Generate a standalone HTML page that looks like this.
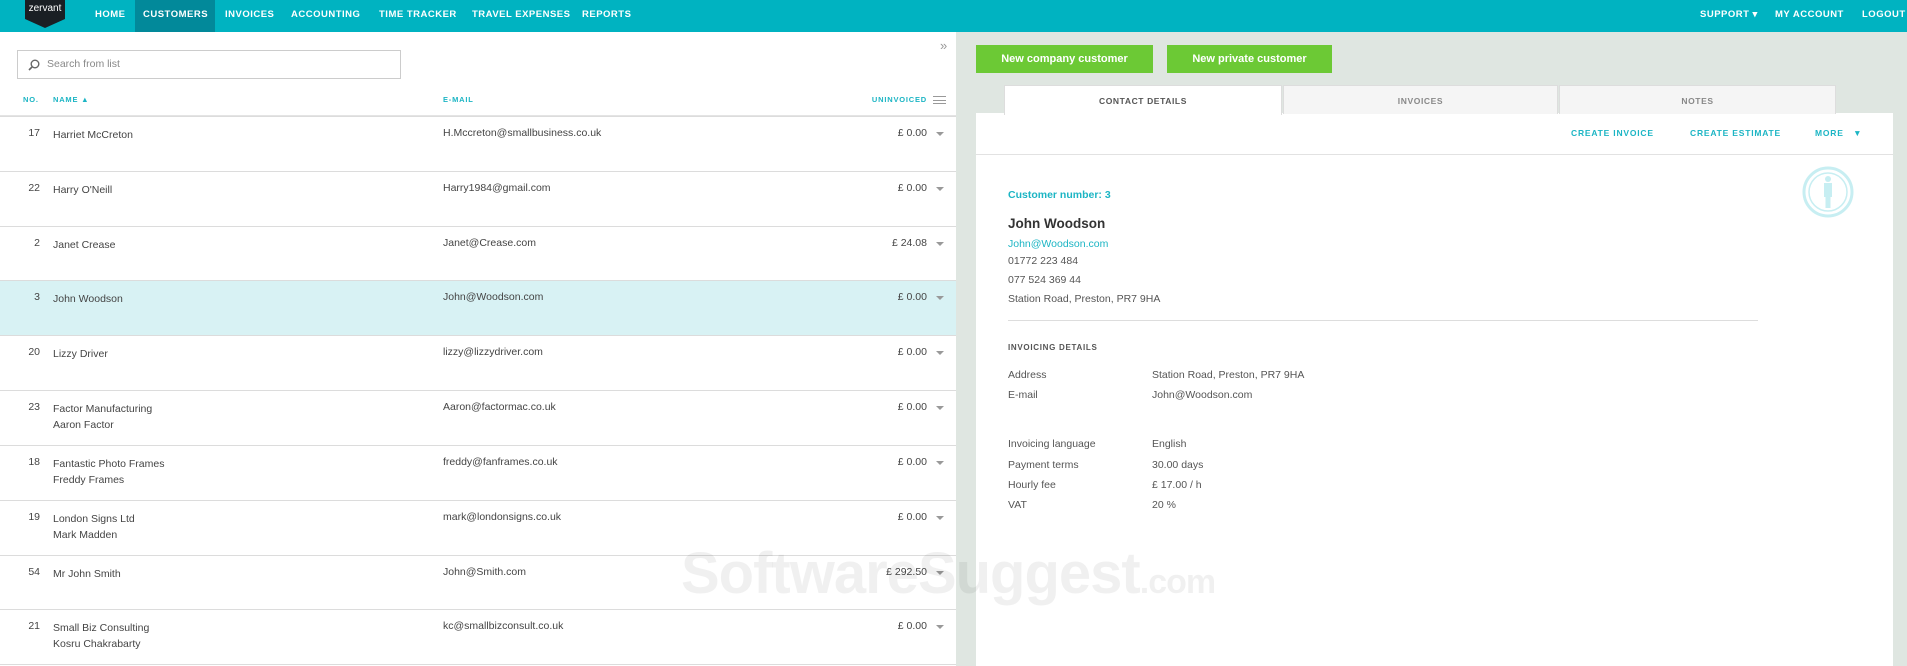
<!DOCTYPE html>
<html><head><meta charset="utf-8"><style>
*{margin:0;padding:0;box-sizing:border-box}
body{width:1907px;height:666px;overflow:hidden;background:#dfe6e1;font-family:"Liberation Sans",sans-serif;color:#444;position:relative}
.nav{position:absolute;left:0;top:0;width:1907px;height:32px;background:#00b3c1}
.nav a{position:absolute;top:0;height:32px;line-height:29px;color:#fff;font-size:9.5px;font-weight:bold;letter-spacing:.5px;text-decoration:none}
.logo{position:absolute;left:25px;top:0;width:40px;height:28px}
.left{position:absolute;left:0;top:32px;width:956px;height:634px;background:#fff}
.search{position:absolute;left:17px;top:18px;width:384px;height:29px;border:1px solid #ccc;font-size:10.5px;color:#888;line-height:27px;padding-left:29px}
.hdr{position:absolute;top:63px;font-size:7.5px;font-weight:bold;color:#1cb5c4;letter-spacing:.8px}
.row{position:absolute;left:0;width:956px;height:55px;border-top:1px solid #dcdcdc;font-size:10.5px;color:#444}
.row span{position:absolute}
.n{right:916px;top:10px}
.nm{left:53px;top:10px;line-height:16px}
.em{left:443px;top:10px}
.am{right:29px;top:10px}
.ar{left:936px;top:15px;width:0;height:0;border-left:4px solid transparent;border-right:4px solid transparent;border-top:4px solid #999}
.btn{position:absolute;top:45px;height:28px;background:#6cc935;color:#fff;font-size:11px;font-weight:bold;text-align:center;line-height:28px}
.tab{position:absolute;top:85px;height:29px;font-size:8.5px;font-weight:bold;letter-spacing:.6px;text-align:center;line-height:30px;border:1px solid #ddd;border-bottom:none}
.panel{position:absolute;left:976px;top:113px;width:917px;height:553px;background:#fff}
.act{position:absolute;top:128px;font-size:8.5px;font-weight:bold;color:#1cb5c4;letter-spacing:.8px}
.t{position:absolute;left:1008px;font-size:10.5px;color:#555}
.v{position:absolute;left:1152px;font-size:10.5px;color:#555}
</style></head><body>
<div class="nav">
<svg class="logo" viewBox="0 0 40 28"><path d="M0 0H40V19L20 28L0 19Z" fill="#1a1f24"/><text x="20" y="11" fill="#fff" font-size="10" text-anchor="middle" font-family="Liberation Sans">zervant</text></svg>
<div style="position:absolute;left:135px;top:0;width:80px;height:32px;background:#02899a"></div>
<a style="left:95px">HOME</a><a style="left:143px">CUSTOMERS</a><a style="left:225px">INVOICES</a><a style="left:291px">ACCOUNTING</a><a style="left:379px">TIME TRACKER</a><a style="left:472px">TRAVEL EXPENSES</a><a style="left:582px">REPORTS</a>
<a style="left:1700px">SUPPORT &#9662;</a><a style="left:1775px">MY ACCOUNT</a><a style="left:1862px">LOGOUT</a>
</div>
<div class="left">
<div class="search"><svg style="position:absolute;left:10px;top:8px" width="12" height="12" viewBox="0 0 12 12"><circle cx="7" cy="5" r="3.8" fill="none" stroke="#666" stroke-width="1.4"/><path d="M4.3 7.7L1 11" stroke="#666" stroke-width="1.6"/></svg>Search from list</div>
<div style="position:absolute;left:940px;top:6px;color:#999;font-size:13px">»</div>
<div class="hdr" style="left:23px">NO.</div>
<div class="hdr" style="left:53px">NAME &#9650;</div>
<div class="hdr" style="left:443px">E-MAIL</div>
<div class="hdr" style="right:29px">UNINVOICED</div>
<div style="position:absolute;left:933px;top:64px;width:13px;height:8px;border-top:1px solid #999;border-bottom:1px solid #999"></div><div style="position:absolute;left:933px;top:68px;width:13px;height:1px;background:#999"></div>
<div style="position:absolute;left:0;top:83px;width:956px;height:2px;background:#e4e4e4"></div>
</div>

<div class="row" style="top:116px"><span class="n">17</span><span class="nm">Harriet McCreton</span><span class="em">H.Mccreton@smallbusiness.co.uk</span><span class="am">£ 0.00</span><span class="ar"></span></div>
<div class="row" style="top:171px"><span class="n">22</span><span class="nm">Harry O'Neill</span><span class="em">Harry1984@gmail.com</span><span class="am">£ 0.00</span><span class="ar"></span></div>
<div class="row" style="top:226px"><span class="n">2</span><span class="nm">Janet Crease</span><span class="em">Janet@Crease.com</span><span class="am">£ 24.08</span><span class="ar"></span></div>
<div class="row" style="top:280px;background:#d8f2f4"><span class="n">3</span><span class="nm">John Woodson</span><span class="em">John@Woodson.com</span><span class="am">£ 0.00</span><span class="ar"></span></div>
<div class="row" style="top:335px"><span class="n">20</span><span class="nm">Lizzy Driver</span><span class="em">lizzy@lizzydriver.com</span><span class="am">£ 0.00</span><span class="ar"></span></div>
<div class="row" style="top:390px"><span class="n">23</span><span class="nm">Factor Manufacturing<br>Aaron Factor</span><span class="em">Aaron@factormac.co.uk</span><span class="am">£ 0.00</span><span class="ar"></span></div>
<div class="row" style="top:445px"><span class="n">18</span><span class="nm">Fantastic Photo Frames<br>Freddy Frames</span><span class="em">freddy@fanframes.co.uk</span><span class="am">£ 0.00</span><span class="ar"></span></div>
<div class="row" style="top:500px"><span class="n">19</span><span class="nm">London Signs Ltd<br>Mark Madden</span><span class="em">mark@londonsigns.co.uk</span><span class="am">£ 0.00</span><span class="ar"></span></div>
<div class="row" style="top:555px"><span class="n">54</span><span class="nm">Mr John Smith</span><span class="em">John@Smith.com</span><span class="am">£ 292.50</span><span class="ar"></span></div>
<div class="row" style="top:609px"><span class="n">21</span><span class="nm">Small Biz Consulting<br>Kosru Chakrabarty</span><span class="em">kc@smallbizconsult.co.uk</span><span class="am">£ 0.00</span><span class="ar"></span></div>
<div style="position:absolute;left:0;top:664px;width:956px;height:1px;background:#dcdcdc"></div>

<div class="btn" style="left:976px;width:177px">New company customer</div>
<div class="btn" style="left:1167px;width:165px">New private customer</div>
<div class="panel"></div>
<div class="tab" style="left:1004px;width:278px;background:#fff;color:#555;height:30px">CONTACT DETAILS</div>
<div class="tab" style="left:1283px;width:275px;background:#f5f5f5;color:#888">INVOICES</div>
<div class="tab" style="left:1559px;width:277px;background:#f5f5f5;color:#888">NOTES</div>
<div style="position:absolute;left:976px;top:154px;width:917px;height:1px;background:#e2e2e2"></div>
<div class="act" style="left:1571px">CREATE INVOICE</div>
<div class="act" style="left:1690px">CREATE ESTIMATE</div>
<div class="act" style="left:1815px">MORE &nbsp;&nbsp;&#9660;</div>

<svg style="position:absolute;left:1802px;top:166px" width="52" height="52" viewBox="0 0 52 52"><circle cx="26" cy="26" r="24" fill="none" stroke="#c7eef2" stroke-width="3"/><circle cx="26" cy="26" r="19" fill="none" stroke="#c7eef2" stroke-width="1.5"/><circle cx="26" cy="13" r="3" fill="#c7eef2"/><path d="M22 17h8v14h-1.5v11h-5V31H22Z" fill="#c7eef2"/></svg>

<div style="position:absolute;left:1008px;top:189px;font-size:10.5px;font-weight:bold;color:#1cb5c4">Customer number: 3</div>
<div style="position:absolute;left:1008px;top:216px;font-size:13.5px;font-weight:bold;color:#333">John Woodson</div>
<div class="t" style="top:238px;color:#1cb5c4">John@Woodson.com</div>
<div class="t" style="top:255px">01772 223 484</div>
<div class="t" style="top:274px">077 524 369 44</div>
<div class="t" style="top:293px">Station Road, Preston, PR7 9HA</div>
<div style="position:absolute;left:1008px;top:320px;width:750px;height:1px;background:#ddd"></div>
<div class="t" style="top:343px;font-size:8px;font-weight:bold;letter-spacing:.7px;color:#555">INVOICING DETAILS</div>
<div class="t" style="top:369px">Address</div><div class="v" style="top:369px">Station Road, Preston, PR7 9HA</div>
<div class="t" style="top:389px">E-mail</div><div class="v" style="top:389px">John@Woodson.com</div>
<div class="t" style="top:438px">Invoicing language</div><div class="v" style="top:438px">English</div>
<div class="t" style="top:459px">Payment terms</div><div class="v" style="top:459px">30.00 days</div>
<div class="t" style="top:479px">Hourly fee</div><div class="v" style="top:479px">£ 17.00 / h</div>
<div class="t" style="top:499px">VAT</div><div class="v" style="top:499px">20 %</div>

<div style="position:absolute;left:681px;top:540px;font-size:58px;font-weight:bold;color:rgba(0,0,0,0.06);white-space:nowrap;letter-spacing:-1px">SoftwareSuggest<span style="font-size:34px">.com</span></div>
</body></html>
